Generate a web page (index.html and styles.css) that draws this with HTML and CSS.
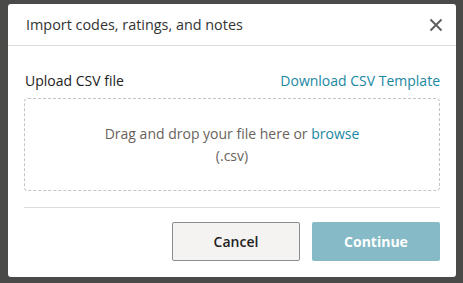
FILE: index.html
```html
<!DOCTYPE html>
<html>
<head>
<meta charset="utf-8">
<link rel="stylesheet" href="styles.css">
</head>
<body>
<div class="modal">
  <div class="modal-header">
    <h1 class="title">Import codes, ratings, and notes</h1>
    <button class="close" aria-label="Close">
      <svg width="14" height="14" viewBox="0 0 14 14"><path d="M1.5 1.5 L12.5 12.5 M12.5 1.5 L1.5 12.5" stroke="#606060" stroke-width="2" fill="none"/></svg>
    </button>
  </div>
  <div class="modal-body">
    <div class="label-row">
      <span class="label">Upload CSV file</span>
      <a class="link" href="#">Download CSV Template</a>
    </div>
    <div class="dropzone">
      <p>Drag and drop your file here or <a class="link" href="#">browse</a><br>(.csv)</p>
    </div>
    <hr class="sep">
    <div class="actions">
      <button class="btn btn-cancel">Cancel</button>
      <button class="btn btn-continue">Continue</button>
    </div>
  </div>
</div>
</body>
</html>
```

FILE: styles.css
```css
html, body {
  margin: 0;
  padding: 0;
}
body {
  background: #4a4a49;
  font-family: "Open Sans", "Liberation Sans", sans-serif;
  padding: 4px 7px 6px 8px;
}
.modal {
  width: 448px;
  height: 273px;
  background: #fff;
  border-radius: 3px;
  box-sizing: border-box;
}
.modal-header {
  height: 41px;
  border-bottom: 1px solid #dedede;
  display: flex;
  align-items: center;
  justify-content: space-between;
  padding: 0 13px 0 18px;
}
.title {
  margin: 0;
  font-size: 14.4px;
  font-weight: 400;
  color: #333;
}
.close {
  border: 0;
  background: none;
  padding: 0;
  width: 14px;
  height: 14px;
  display: flex;
}
.modal-body {
  padding: 24px 16px 16px;
}
.label-row {
  display: flex;
  justify-content: space-between;
  align-items: center;
  height: 20px;
  padding-left: 1px;
}
.label {
  font-size: 14px;
  color: #222;
}
.link {
  color: #1a87a1;
  text-decoration: none;
  font-size: 14px;
}
.dropzone {
  margin-top: 8px;
  height: 93px;
  box-sizing: border-box;
  border: 1px dashed #c4c4c4;
  border-radius: 4px;
  display: flex;
  align-items: center;
  justify-content: center;
}
.dropzone p {
  margin: 0;
  text-align: center;
  font-size: 14px;
  line-height: 22px;
  color: #6a625a;
}
.sep {
  border: 0;
  border-top: 1px solid #dcdcdc;
  margin: 16px 0 14px;
}
.actions {
  display: flex;
  justify-content: flex-end;
  gap: 12px;
}
.btn {
  width: 128px;
  height: 39px;
  font-family: inherit;
  font-size: 14px;
  border-radius: 2px;
  box-sizing: border-box;
}
.btn-cancel {
  background: #f4f3f1;
  border: 1px solid #8c8c8c;
  color: #222;
  font-weight: 600;
}
.btn-continue {
  background: #86bac6;
  border: 0;
  color: #fff;
  font-weight: 700;
}
```
